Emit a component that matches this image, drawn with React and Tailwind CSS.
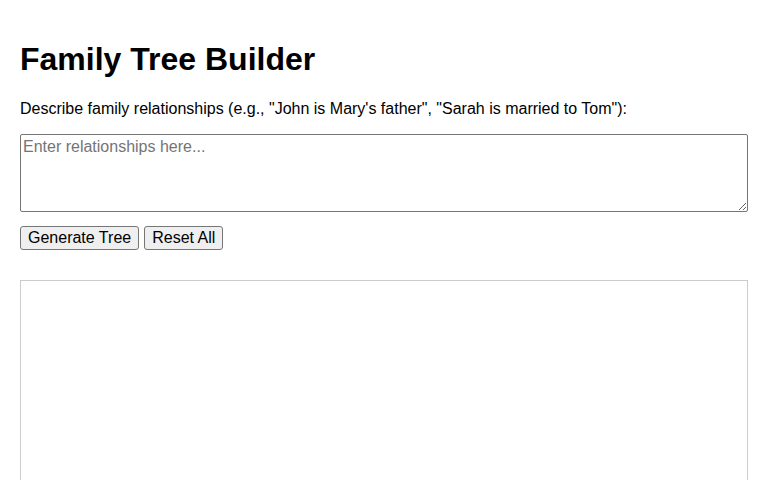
import React, { useState } from 'react';

export default function App() {
  const [text, setText] = useState('');

  return (
    <div className="min-h-screen bg-white p-[20px] text-black font-['Liberation_Sans',Arial,sans-serif]">
      <h1 className="mt-[21px] mb-[22px] text-[32px] leading-[37px] font-bold">Family Tree Builder</h1>

      <p className="mb-[16px] text-[16px] leading-[18px]">
        Describe family relationships (e.g., "John is Mary's father", "Sarah is married to Tom"):
      </p>

      <textarea
        value={text}
        onChange={(e) => setText(e.target.value)}
        placeholder="Enter relationships here..."
        className="block w-full h-[78px] border border-[#767676] rounded-[2px] px-[2px] pt-[3px] pb-[2px] text-[16px] leading-[18px] placeholder:text-[#757575] outline-none resize-y"
      />

      <div className="mt-[14px] flex gap-[5px]">
        <button className="h-[24px] px-[7px] text-[16px] leading-[18px] bg-[#efefef] border border-[#767676] rounded-[3px]">
          Generate Tree
        </button>
        <button className="h-[24px] px-[7px] text-[16px] leading-[18px] bg-[#efefef] border border-[#767676] rounded-[3px]">
          Reset All
        </button>
      </div>

      <div className="mt-[30px] h-[400px] border border-[#cccccc]"></div>
    </div>
  );
}
